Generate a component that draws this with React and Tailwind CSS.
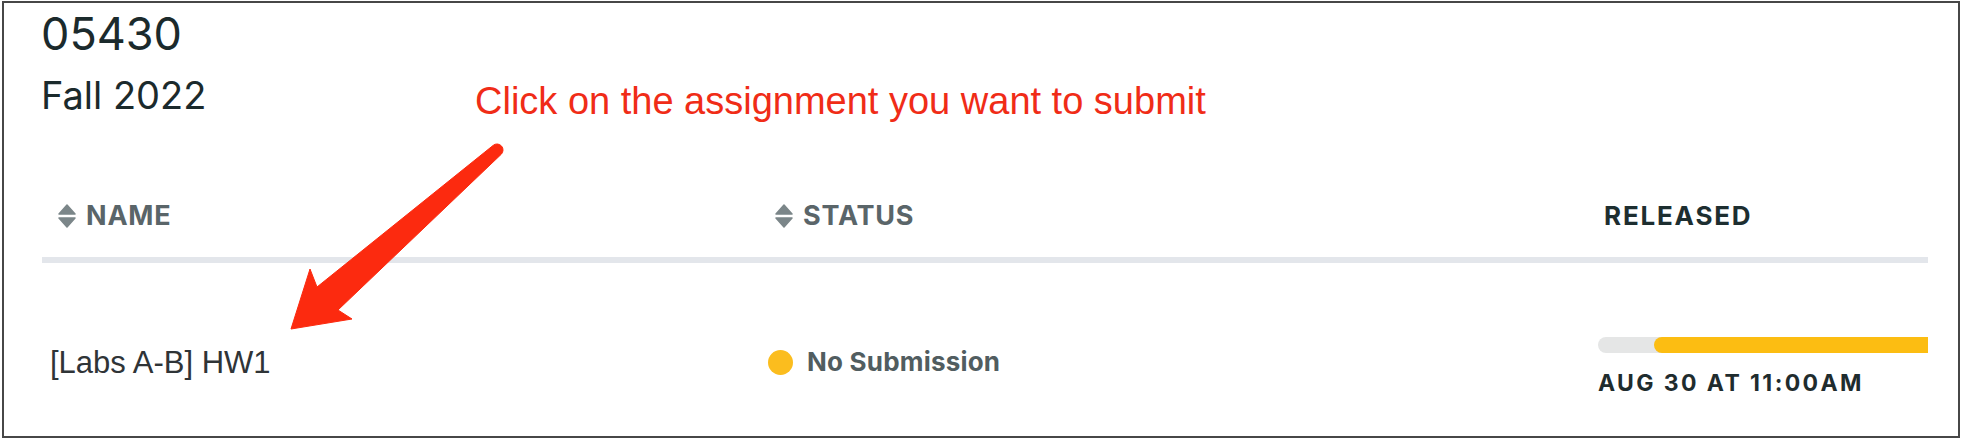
import React from "react";

function SortIcon() {
  return (
    <svg width="18" height="24" viewBox="0 0 18 24" className="shrink-0">
      <path d="M9 1 L17 10 L1 10 Z" fill="#7b8689" stroke="#7b8689" strokeWidth="1.5" strokeLinejoin="round" />
      <path d="M1 14 L17 14 L9 23 Z" fill="#7b8689" stroke="#7b8689" strokeWidth="1.5" strokeLinejoin="round" />
    </svg>
  );
}

export default function App() {
  return (
    <div className="w-[1962px] h-[439px] bg-white pl-[2px] pt-[1px] pr-[2px] pb-[1px]">
      <div className="relative h-full border-2 border-[#474747] overflow-hidden font-['Inter',sans-serif]">
        <div className="pl-[37px] pt-[8px] text-[#1b2a2c]">
          <div className="text-[45px] leading-none">05430</div>
          <div className="mt-[20px] text-[38px] leading-none">Fall 2022</div>
        </div>

        <div className="ml-[38px] w-[1886px]">
          <div className="grid grid-cols-[718px_830px_338px] pt-[88px] pb-[28px] text-[27px] leading-none font-bold tracking-[0.8px]">
            <div className="flex items-center gap-[10px] pl-[16px] text-[#5a6569]">
              <SortIcon />
              <span>NAME</span>
            </div>
            <div className="flex items-center gap-[10px] pl-[15px] text-[#5a6569]">
              <SortIcon />
              <span>STATUS</span>
            </div>
            <div className="flex items-center pl-[14px] text-[#1d2e30] text-[26px] tracking-[1.8px]">
              <span>RELEASED</span>
            </div>
          </div>
          <div className="h-[6px] bg-[#e3e6eb]" />
          <div className="grid grid-cols-[718px_830px_338px] items-start">
            <div className="pl-[8px] pt-[84px] font-['Liberation_Sans',Arial,sans-serif] text-[31px] leading-none text-[#2f3437]">
              [Labs A-B] HW1
            </div>
            <div className="pl-[8px] pt-[86px] flex items-center gap-[14px]">
              <span className="w-[25px] h-[25px] rounded-full bg-[#fbbd1e] shrink-0" />
              <span className="text-[26px] leading-none font-bold text-[#515d60] tracking-[0.2px]">No Submission</span>
            </div>
            <div className="pl-[8px] pt-[74px]">
              <div className="w-[330px] h-[16px] rounded-l-full bg-[#e5e6e6] flex">
                <div className="ml-[56px] h-full flex-1 rounded-l-full bg-[#fcbd12]" />
              </div>
              <div className="mt-[19px] text-[23px] leading-none font-bold tracking-[2.4px] text-[#1f2c2e] whitespace-nowrap">
                AUG 30 AT 11:00AM
              </div>
            </div>
          </div>
        </div>

        <div className="absolute left-[471px] top-[79px] font-['Liberation_Sans',Arial,sans-serif] text-[38px] leading-none text-[#f02c17] whitespace-nowrap">
          Click on the assignment you want to submit
        </div>

        <svg
          className="absolute left-[281px] top-[137px] pointer-events-none"
          width="230"
          height="200"
          viewBox="285 140 230 200"
        >
          <path
            d="M493 145.5 L317 287 L310 269 L291 329 L352 319 L338 310 L501 154.5 A6 6 0 0 0 493 145.5 Z"
            fill="#fc2a0f"
            stroke="#fc2a0f"
            strokeWidth="1"
            strokeLinejoin="round"
          />
        </svg>
      </div>
    </div>
  );
}
